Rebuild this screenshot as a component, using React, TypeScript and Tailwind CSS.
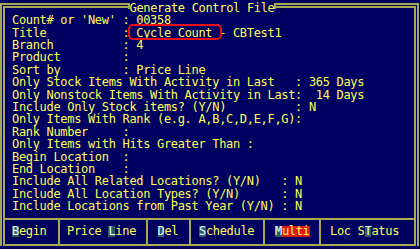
import React from "react";

const rows: React.ReactNode[] = [
  "Count# or 'New' : 00358",
  <>
    {"Title           : "}
    <span className="relative">
      Cycle Count
      <span className="absolute -top-[2px] -bottom-[0px] -left-[8px] -right-[10px] border-2 border-[#e81010] rounded-[5px]" />
    </span>
    {" - CBTest1"}
  </>,
  "Branch          : 4",
  "Product         :",
  "Sort by         : Price Line",
  "Only Stock Items With Activity in Last   : 365 Days",
  "Only Nonstock Items With Activity in Last:  14 Days",
  "Include Only Stock items? (Y/N)          : N",
  "Only Items With Rank (e.g. A,B,C,D,E,F,G):",
  "Rank Number     :",
  "Only Items with Hits Greater Than :",
  "Begin Location  :",
  "End Location    :",
  "Include All Related Locations? (Y/N)   : N",
  "Include All Location Types? (Y/N)      : N",
  "Include Locations from Past Year (Y/N) : N",
];

function Hot({ c }: { c: string }) {
  return (
    <span className="inline-block h-[11px] leading-[11px] bg-[#2f5c62] text-[#e6ffff]">{c}</span>
  );
}

export default function App() {
  return (
    <div className="relative w-[420px] h-[249px] bg-[#000060] flex flex-col pt-[3px] pr-[1px] pb-[3px] overflow-hidden font-['DejaVu_Sans_Mono',monospace] text-[12px] tracking-[-0.32px] leading-[12.4px] text-[#ffff55]">
      <div className="flex-1 flex flex-col border-t-2 border-x-2 border-[#a8a850] pt-px px-px">
        <div className="flex-1 flex flex-col border-2 border-[#a8a850]">
          <div className="pt-[6.3px] pl-[7px]">
            {rows.map((r, i) => (
              <div key={i} className="h-[12.4px] whitespace-pre">
                {r}
              </div>
            ))}
          </div>
          <div className="mt-[5.3px] h-[2px] bg-[#a8a850]" />
          <div className="flex-1 flex whitespace-pre">
            <div className="w-[55px] border-r-2 border-[#a8a850] pt-[5.6px] pl-[7px]">
              <Hot c="B" />egin
            </div>
            <div className="w-[88px] border-r-2 border-[#a8a850] pt-[5.6px] pl-[7px]">
              {"Price "}
              <Hot c="L" />ine
            </div>
            <div className="w-[43px] border-r-2 border-[#a8a850] pt-[5.6px] pl-[9.5px]">
              <Hot c="D" />el
            </div>
            <div className="w-[74px] border-r-2 border-[#a8a850] pt-[5.6px] pl-[8px]">
              <Hot c="S" />chedule
            </div>
            <div className="w-[56px] border-r-2 border-[#a8a850] pt-[5.6px] pl-[10px]">
              <Hot c="M" />
              <span className="inline-block h-[11px] leading-[11px] bg-[#e01818]">ulti</span>
            </div>
            <div className="flex-1 pt-[5.6px] pl-[9px]">
              {"Loc S"}
              <Hot c="T" />atus
            </div>
          </div>
        </div>
      </div>
      <div className="absolute left-[128px] top-[1.5px] bg-[#000060] px-[1.5px] whitespace-pre">
        <span className="absolute left-0 top-[1.5px] w-[2px] h-[6px] bg-[#a8a850]" />
        Generate Control File
        <span className="absolute right-0 top-[1.5px] w-[2px] h-[6px] bg-[#a8a850]" />
      </div>
    </div>
  );
}
